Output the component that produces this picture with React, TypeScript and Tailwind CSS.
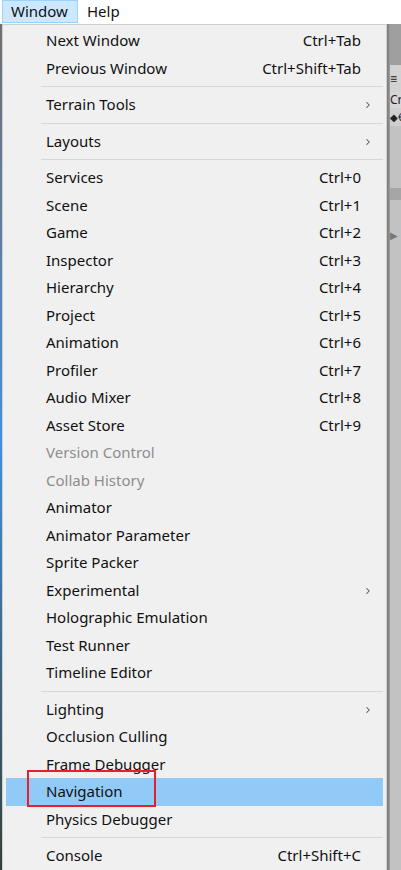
import { ChevronRight } from "lucide-react";

type Entry =
  | { kind: "sep" }
  | { kind: "item"; label: string; shortcut?: string; sub?: boolean; disabled?: boolean; active?: boolean };

const item = (label: string, shortcut?: string, extra: Partial<Entry> = {}): Entry =>
  ({ kind: "item", label, shortcut, ...extra } as Entry);
const sep: Entry = { kind: "sep" };

const entries: Entry[] = [
  item("Next Window", "Ctrl+Tab"),
  item("Previous Window", "Ctrl+Shift+Tab"),
  sep,
  item("Terrain Tools", undefined, { sub: true }),
  sep,
  item("Layouts", undefined, { sub: true }),
  sep,
  item("Services", "Ctrl+0"),
  item("Scene", "Ctrl+1"),
  item("Game", "Ctrl+2"),
  item("Inspector", "Ctrl+3"),
  item("Hierarchy", "Ctrl+4"),
  item("Project", "Ctrl+5"),
  item("Animation", "Ctrl+6"),
  item("Profiler", "Ctrl+7"),
  item("Audio Mixer", "Ctrl+8"),
  item("Asset Store", "Ctrl+9"),
  item("Version Control", undefined, { disabled: true }),
  item("Collab History", undefined, { disabled: true }),
  item("Animator"),
  item("Animator Parameter"),
  item("Sprite Packer"),
  item("Experimental", undefined, { sub: true }),
  item("Holographic Emulation"),
  item("Test Runner"),
  item("Timeline Editor"),
  sep,
  item("Lighting", undefined, { sub: true }),
  item("Occlusion Culling"),
  item("Frame Debugger"),
  item("Navigation", undefined, { active: true }),
  item("Physics Debugger"),
  sep,
  item("Console", "Ctrl+Shift+C"),
];

function Row({ e }: { e: Entry }) {
  if (e.kind === "sep")
    return (
      <div className="h-[9px] flex items-center pl-[35px]">
        <div className="h-px w-full bg-[#d7d7d7]" />
      </div>
    );
  return (
    <div className={`relative h-[27.5px] flex items-center pl-[40px] pr-[22px] ${e.active ? "bg-[#91c9f7]" : ""}`}>
      <span className={`flex-1 ${e.disabled ? "text-[#8d8d8d]" : "text-[#111]"}`}>{e.label}</span>
      {e.shortcut && <span className="text-[#111]">{e.shortcut}</span>}
      {e.sub && (
        <ChevronRight className="absolute right-[10px] top-[9px] w-[10px] h-[10px] text-[#555]" strokeWidth={2.5} />
      )}
      {e.active && (
        <div className="absolute left-[21px] top-[-8px] w-[129px] h-[37px] border-2 border-[#e3202c]" />
      )}
    </div>
  );
}

export default function App() {
  return (
    <div className="w-[401px] h-[870px] overflow-hidden flex flex-col bg-white text-[15px] font-['Noto_Sans',sans-serif] leading-none">
      <div className="h-[24px] flex items-stretch bg-white shrink-0">
        <div className="ml-[2px] w-[76px] h-[23px] bg-[#cce8ff] border border-[#99d1ff] flex items-center pl-[8px] text-[#111]">Window</div>
        <div className="ml-[9px] flex items-center text-[#111] pb-[1px]">Help</div>
      </div>
      <div className="flex flex-1 min-h-0">
        <div className="w-[2px] shrink-0 bg-gradient-to-b from-[#6e6e6e] via-[#3f8fdf] to-[#34413a]" />
        <div className="w-[385px] shrink-0 bg-[#f0f0f0] border-l border-t border-r border-[#cfcfcf] pt-[2px] pl-[3px] pr-[3px]">
          {entries.map((e, i) => (
            <Row key={i} e={e} />
          ))}
        </div>
        <div className="flex-1 min-w-0 flex overflow-hidden">
          <div className="w-[3px] shrink-0 bg-gradient-to-r from-[#7a7a7a] to-[#9a9a9a]" />
          <div className="flex-1 min-w-0 flex flex-col bg-[#c2c2c2] text-[12px] text-[#222]">
            <div className="h-[41px] bg-[#9f9f9f]" />
            <div className="h-[27px] bg-[#d2d2d2] flex items-center">≡</div>
            <div className="h-[16px] bg-[#d6d6d6] flex items-center">Cr</div>
            <div className="h-[18px] bg-[#cfcfcf] flex items-center text-[10px]">◆€</div>
            <div className="h-[62px]" />
            <div className="h-[12px] bg-[#a6a6a6]" />
            <div className="h-[30px]" />
            <div className="text-[#777] text-[10px]">▶</div>
          </div>
        </div>
      </div>
    </div>
  );
}
